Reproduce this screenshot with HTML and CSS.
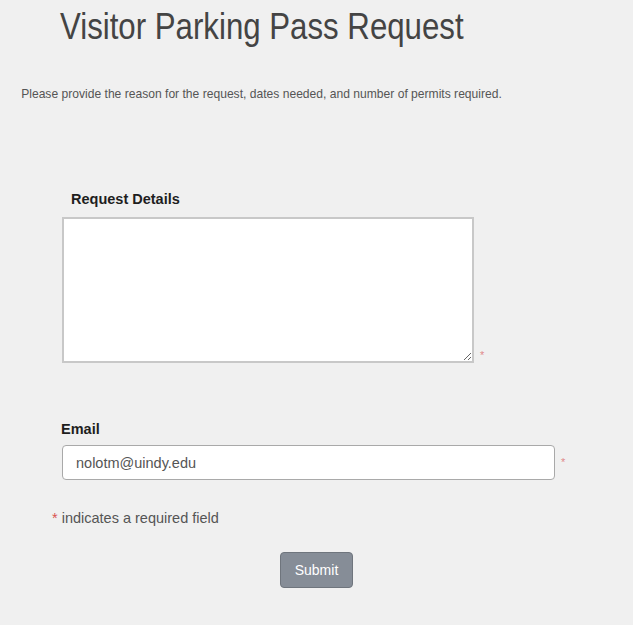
FILE: index.html
```html
<!DOCTYPE html>
<html lang="en">
<head>
<meta charset="utf-8">
<title>Visitor Parking Pass Request</title>
<link rel="stylesheet" href="styles.css">
</head>
<body>
<main class="page">
  <header class="header">
    <h1 class="title">Visitor Parking Pass Request</h1>
    <p class="intro">Please provide the reason for the request, dates needed, and number of permits required.</p>
  </header>
  <form class="form">
    <div class="field field-details">
      <label class="label label-details" for="details">Request Details</label>
      <div class="control-row">
        <textarea id="details" class="textarea"></textarea>
        <span class="req req-area">*</span>
      </div>
    </div>
    <div class="field field-email">
      <label class="label label-email" for="email">Email</label>
      <div class="control-row control-row-center">
        <input id="email" class="input" type="email" value="nolotm@uindy.edu">
        <span class="req">*</span>
      </div>
    </div>
    <p class="note"><span class="req-note">*</span> indicates a required field</p>
    <div class="actions">
      <button type="button" class="submit">Submit</button>
    </div>
  </form>
</main>
</body>
</html>
```

FILE: styles.css
```css
html, body {
  margin: 0;
  padding: 0;
  background: #f0f0f0;
}
body {
  font-family: "Liberation Sans", Arial, sans-serif;
  color: #333;
}
.page {
  display: flex;
  flex-direction: column;
}
.header {
  width: 523px;
  display: flex;
  flex-direction: column;
  align-items: center;
}
.title {
  margin: 0;
  padding-top: 7px;
  text-align: center;
  font-size: 36px;
  line-height: 40px;
  font-weight: normal;
  color: #444;
  white-space: nowrap;
  transform: scaleX(0.867);
}
.intro {
  margin: 40px 0 0;
  text-align: center;
  font-size: 12.1px;
  line-height: 14px;
  color: #555;
  white-space: nowrap;
}
.form {
  display: flex;
  flex-direction: column;
  padding-left: 62px;
  margin-top: 90px;
}
.field {
  display: flex;
  flex-direction: column;
}
.label {
  font-size: 14.5px;
  font-weight: bold;
  color: #1e1e1e;
  line-height: 17px;
}
.label-details {
  margin-left: 9px;
  margin-bottom: 9px;
}
.label-email {
  margin-left: -1px;
  margin-bottom: 7px;
}
.control-row {
  display: flex;
  align-items: flex-end;
  gap: 6px;
}
.control-row-center {
  align-items: center;
}
.textarea {
  width: 412px;
  height: 146px;
  box-sizing: border-box;
  border: 2px solid #c8c8c8;
  background: #fff;
  margin: 0;
  resize: both;
  font-family: inherit;
}
.req {
  color: #e08a8a;
  font-size: 11px;
  line-height: 11px;
}
.req-area {
  margin-bottom: 2px;
}
.field-email {
  margin-top: 58px;
}
.input {
  width: 493px;
  height: 35px;
  box-sizing: border-box;
  border: 1px solid #a9a9a9;
  border-radius: 4px;
  background: #fff;
  padding: 0 13px;
  margin: 0;
  font-family: inherit;
  font-size: 14.5px;
  color: #555;
}
.note {
  margin: 30px 0 0 -10px;
  font-size: 14.5px;
  line-height: 17px;
  color: #555;
}
.req-note {
  color: #d9534f;
}
.actions {
  display: flex;
  justify-content: center;
  margin-left: -62px;
  margin-top: 25px;
}
.submit {
  width: 73px;
  height: 36px;
  border: 1px solid #6f757d;
  border-radius: 4px;
  background: #868d97;
  color: #fff;
  font-family: inherit;
  font-size: 14px;
  padding: 0;
}
```
